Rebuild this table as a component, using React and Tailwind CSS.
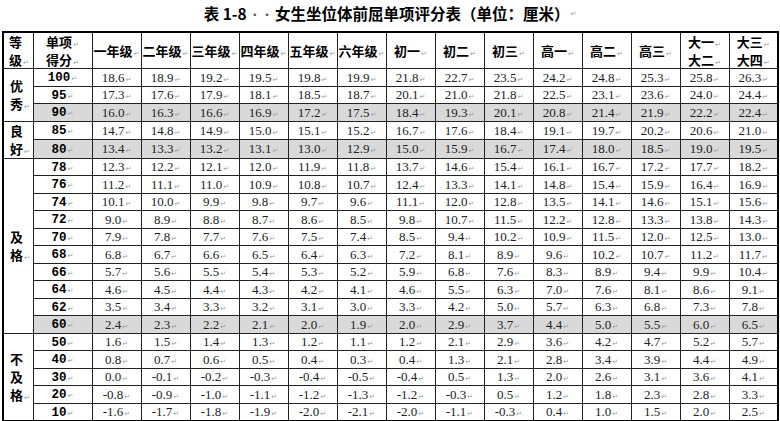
const grades = ['一年级', '二年级', '三年级', '四年级', '五年级', '六年级', '初一', '初二', '初三', '高一', '高二', '高三'];

const groups = [
  {
    label: ['优', '秀'],
    rows: [
      ['100', '18.6 18.9 19.2 19.5 19.8 19.9 21.8 22.7 23.5 24.2 24.8 25.3 25.8 26.3'],
      ['95', '17.3 17.6 17.9 18.1 18.5 18.7 20.1 21.0 21.8 22.5 23.1 23.6 24.0 24.4'],
      ['90', '16.0 16.3 16.6 16.9 17.2 17.5 18.4 19.3 20.1 20.8 21.4 21.9 22.2 22.4', true],
    ],
  },
  {
    label: ['良', '好'],
    rows: [
      ['85', '14.7 14.8 14.9 15.0 15.1 15.2 16.7 17.6 18.4 19.1 19.7 20.2 20.6 21.0'],
      ['80', '13.4 13.3 13.2 13.1 13.0 12.9 15.0 15.9 16.7 17.4 18.0 18.5 19.0 19.5', true],
    ],
  },
  {
    label: ['及', '格'],
    rows: [
      ['78', '12.3 12.2 12.1 12.0 11.9 11.8 13.7 14.6 15.4 16.1 16.7 17.2 17.7 18.2'],
      ['76', '11.2 11.1 11.0 10.9 10.8 10.7 12.4 13.3 14.1 14.8 15.4 15.9 16.4 16.9'],
      ['74', '10.1 10.0 9.9 9.8 9.7 9.6 11.1 12.0 12.8 13.5 14.1 14.6 15.1 15.6'],
      ['72', '9.0 8.9 8.8 8.7 8.6 8.5 9.8 10.7 11.5 12.2 12.8 13.3 13.8 14.3'],
      ['70', '7.9 7.8 7.7 7.6 7.5 7.4 8.5 9.4 10.2 10.9 11.5 12.0 12.5 13.0'],
      ['68', '6.8 6.7 6.6 6.5 6.4 6.3 7.2 8.1 8.9 9.6 10.2 10.7 11.2 11.7'],
      ['66', '5.7 5.6 5.5 5.4 5.3 5.2 5.9 6.8 7.6 8.3 8.9 9.4 9.9 10.4'],
      ['64', '4.6 4.5 4.4 4.3 4.2 4.1 4.6 5.5 6.3 7.0 7.6 8.1 8.6 9.1'],
      ['62', '3.5 3.4 3.3 3.2 3.1 3.0 3.3 4.2 5.0 5.7 6.3 6.8 7.3 7.8'],
      ['60', '2.4 2.3 2.2 2.1 2.0 1.9 2.0 2.9 3.7 4.4 5.0 5.5 6.0 6.5', true],
    ],
  },
  {
    label: ['不', '及', '格'],
    rows: [
      ['50', '1.6 1.5 1.4 1.3 1.2 1.1 1.2 2.1 2.9 3.6 4.2 4.7 5.2 5.7'],
      ['40', '0.8 0.7 0.6 0.5 0.4 0.3 0.4 1.3 2.1 2.8 3.4 3.9 4.4 4.9'],
      ['30', '0.0 -0.1 -0.2 -0.3 -0.4 -0.5 -0.4 0.5 1.3 2.0 2.6 3.1 3.6 4.1'],
      ['20', '-0.8 -0.9 -1.0 -1.1 -1.2 -1.3 -1.2 -0.3 0.5 1.2 1.8 2.3 2.8 3.3'],
      ['10', '-1.6 -1.7 -1.8 -1.9 -2.0 -2.1 -2.0 -1.1 -0.3 0.4 1.0 1.5 2.0 2.5'],
    ],
  },
];

// word's paragraph mark after each cell
const Mark = () => (
  <span className="ml-[1px] font-['DejaVu_Sans'] text-[7px] font-normal leading-none text-[#9a9a9a]">↵</span>
);

const cell = 'border border-[#222] p-0';
const cjk = "font-['Noto_Sans_CJK_SC',sans-serif]";

const App = () => {
  return (
    <div className="h-[421px] w-[780px] overflow-hidden bg-white text-black">
      <div className={`flex h-[31px] items-center justify-center pb-[3px] text-[15.5px] font-bold ${cjk}`}>
        <span>表 1-8</span>
        <span className="mx-[3px] text-[10px] text-[#555]">· ·</span>
        <span>女生坐位体前屈单项评分表（单位：厘米）</span>
        <Mark />
      </div>

      <table className="ml-[2px] w-[775px] table-fixed border-collapse border-2 border-black">
        <colgroup>
          <col className="w-[30px]" />
          <col className="w-[59px]" />
          {grades.map((g) => (
            <col key={g} className="w-[49px]" />
          ))}
          <col className="w-[49px]" />
          <col className="w-[49px]" />
        </colgroup>
        <thead>
          <tr className={`h-[36px] text-[13px] font-bold leading-[17.5px] ${cjk}`}>
            <th className={`${cell} pl-[5px] text-left font-bold`}>
              等<br />级<Mark />
            </th>
            <th className={`${cell} font-bold`}>
              单项<Mark />
              <br />
              得分<Mark />
            </th>
            {grades.map((g) => (
              <th key={g} className={`${cell} font-bold`}>
                {g}
                <Mark />
              </th>
            ))}
            <th className={`${cell} font-bold`}>
              大一<Mark />
              <br />
              大二<Mark />
            </th>
            <th className={`${cell} font-bold`}>
              大三<Mark />
              <br />
              大四<Mark />
            </th>
          </tr>
        </thead>
        <tbody>
          {groups.map((group) =>
            group.rows.map(([score, values, shaded], i) => (
              <tr key={score} className="h-[17.5px] leading-[13px]">
                {i === 0 && (
                  <td
                    rowSpan={group.rows.length}
                    className={`${cell} pl-[6px] text-left text-[13px] font-bold leading-[18px] ${cjk}`}
                  >
                    {group.label.map((ch, k) => (
                      <div key={k}>
                        {ch}
                        {k === group.label.length - 1 && <Mark />}
                      </div>
                    ))}
                  </td>
                )}
                <td
                  className={`${cell} h-[17.5px] pt-[3px] text-center font-['Liberation_Mono',monospace] text-[12.5px] font-bold ${
                    shaded ? 'bg-[#d9d9d9]' : ''
                  }`}
                >
                  {score}
                  <Mark />
                </td>
                {values.split(' ').map((v, k) => (
                  <td
                    key={k}
                    className={`${cell} h-[17.5px] text-center font-['Liberation_Serif',serif] text-[13px] text-[#222] ${
                      shaded ? 'bg-[#d9d9d9]' : ''
                    }`}
                  >
                    {v}
                    <Mark />
                  </td>
                ))}
              </tr>
            ))
          )}
        </tbody>
      </table>
    </div>
  );
};

export default App;
